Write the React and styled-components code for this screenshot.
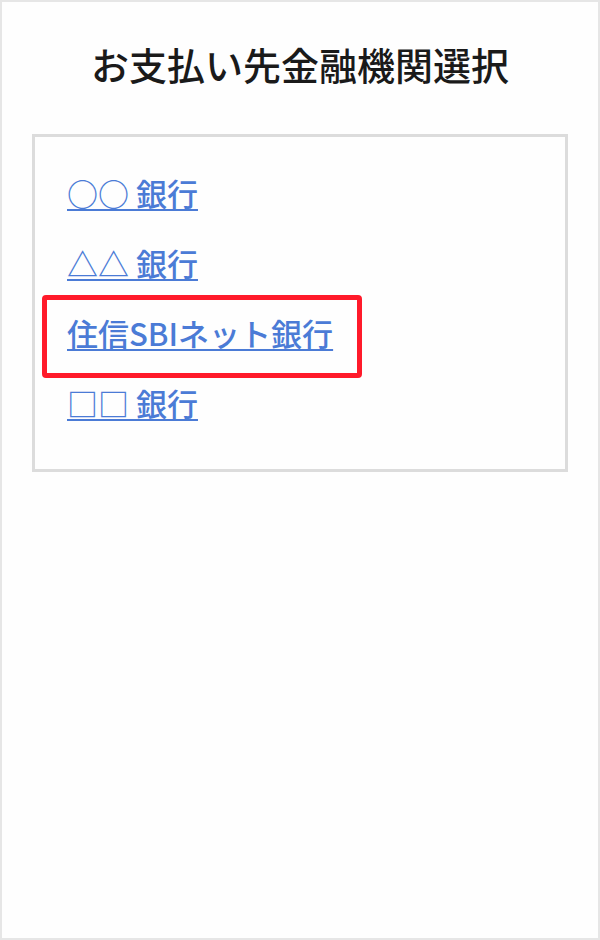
import React from 'react';
import styled, { createGlobalStyle } from 'styled-components';

const GlobalStyle = createGlobalStyle`
  html, body {
    margin: 0;
    padding: 0;
    background: #ffffff;
  }

  body {
    font-family: "Noto Sans CJK JP", "Noto Sans", sans-serif;
  }
`;

const Screen = styled.div`
  box-sizing: border-box;
  width: 600px;
  height: 940px;
  border: 2px solid #e6e6e6;
  background: #fefefe;
  padding: 0 30px;
`;

const Title = styled.h1`
  margin: 0;
  padding-top: 31px;
  height: 101px;
  box-sizing: content-box;
  font-size: 38px;
  line-height: 62px;
  font-weight: 500;
  color: #1a1a1a;
  text-align: center;
`;

const BankPanel = styled.section`
  box-sizing: border-box;
  height: 338px;
  border: 3px solid #dcdcdc;
  padding: 21px 32px 31px;
`;

const BankList = styled.ul`
  list-style: none;
  margin: 0;
  padding: 0;
`;

const BankItem = styled.li`
  position: relative;
  display: flex;
  align-items: center;
  height: 70px;

  ${({ $highlight }) => $highlight && `
    &::after {
      content: "";
      position: absolute;
      left: -25px;
      top: -3px;
      width: 320px;
      height: 83px;
      box-sizing: border-box;
      border: 5px solid #ff1a2a;
      border-radius: 4px;
      pointer-events: none;
    }
  `}
`;

const BankLink = styled.a`
  font-size: 31px;
  line-height: 1.4;
  font-weight: 500;
  color: #4b7bd6;
  text-decoration: underline;
  text-decoration-thickness: 2px;
  text-underline-offset: 3px;
`;

const banks = [
  { name: '○○ 銀行' },
  { name: '△△ 銀行' },
  { name: '住信SBIネット銀行', highlight: true },
  { name: '□□ 銀行' },
];

const App = () => <React.Fragment>
  <GlobalStyle />
  <Screen>
    <Title>お支払い先金融機関選択</Title>

    <BankPanel>
      <BankList>
        {banks.map((bank) => (
          <BankItem key={bank.name} $highlight={bank.highlight}>
            <BankLink href="#">{bank.name}</BankLink>
          </BankItem>
        ))}
      </BankList>
    </BankPanel>
  </Screen>
</React.Fragment>;

export default App;
